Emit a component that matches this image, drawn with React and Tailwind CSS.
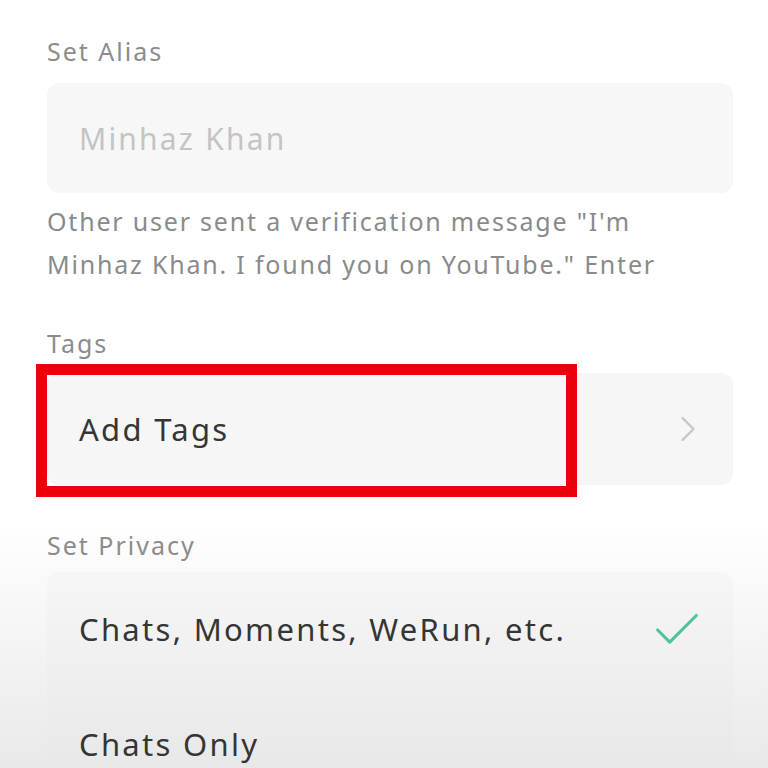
import { Check, ChevronRight } from "lucide-react";

export default function App() {
    return (
        <div className="relative h-[768px] w-[768px] overflow-hidden bg-gradient-to-b from-white from-[68%] to-[#e9e9e9] font-['Noto_Sans',sans-serif]">
            <div className="pl-[47px] pr-[35px] pt-[36px]">

                <div className="h-[32px] flex items-center text-[25px] tracking-[2px] text-[#8c8c8c]">Set Alias</div>
                <div className="mt-[15px] h-[110px] rounded-xl bg-[#f7f7f7] flex items-center px-[32px]">
                    <span className="text-[30px] tracking-[2.2px] text-[#c4c4c4]">Minhaz Khan</span>
                </div>

                <p className="mt-[7px] text-[25px] tracking-[1.8px] leading-[43px] text-[#8a8a8a]">
                    Other user sent a verification message "I'm Minhaz Khan. I found you on YouTube." Enter
                </p>

                <div className="mt-[42px] h-[32px] flex items-center text-[25px] tracking-[2px] text-[#8c8c8c]">Tags</div>
                <div className="relative mt-[13px] h-[112px] rounded-xl bg-[#f6f6f6] flex items-center justify-between pl-[32px] pr-[23px]">
                    <span className="text-[31px] tracking-[2.3px] text-[#353535]">Add Tags</span>
                    <ChevronRight className="w-[44px] h-[44px] text-[#c6c6c6]" strokeWidth={1.3} />
                    <div className="absolute left-[-11px] top-[-9px] w-[541px] h-[133px] border-[11px] border-[#ec0009]" />
                </div>

                <div className="mt-[45px] h-[32px] flex items-center text-[25px] tracking-[2px] text-[#8c8c8c]">Set Privacy</div>
                <div className="mt-[10px] rounded-xl bg-gradient-to-b from-[#f6f6f6] to-[#e6e6e6]">
                    <div className="h-[115px] flex items-center justify-between pl-[32px] pr-[27px]">
                        <span className="text-[31px] tracking-[2.3px] text-[#353535]">Chats, Moments, WeRun, etc.</span>
                        <Check className="w-[58px] h-[58px] text-[#4fc39e]" strokeWidth={1.3} />
                    </div>
                    <div className="h-[115px] flex items-center pl-[32px]">
                        <span className="text-[31px] tracking-[2.3px] text-[#353535]">Chats Only</span>
                    </div>
                </div>

            </div>
        </div>
    );
}
